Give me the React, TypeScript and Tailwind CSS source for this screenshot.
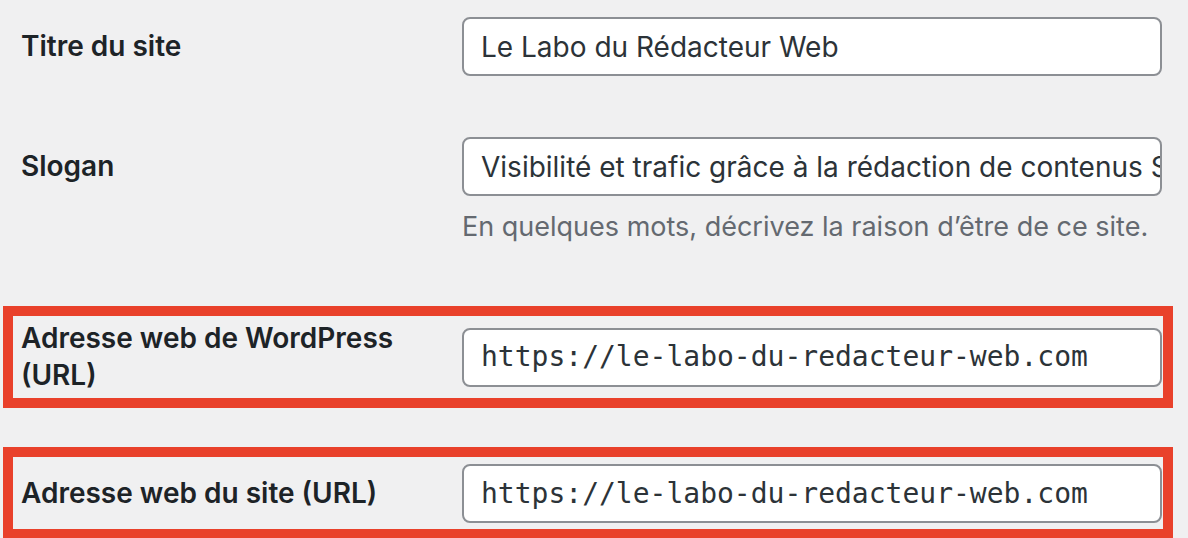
const sans = "font-['Inter','Noto_Sans',sans-serif]";

function Field({ value, mono = false }: { value: string; mono?: boolean }) {
  return (
    <div className="flex h-[59px] w-[700px] items-center overflow-hidden whitespace-nowrap rounded-[8px] border-2 border-[#8c8f94] bg-white pl-[17px] pr-[3px]">
      <span
        className={
          mono
            ? "font-['DejaVu_Sans_Mono','Liberation_Mono',monospace] text-[28px] text-[#2c3338]"
            : `${sans} text-[28px] text-[#2c3338]`
        }
      >
        {value}
      </span>
    </div>
  );
}

function Row({ label, children }: { label: React.ReactNode; children: React.ReactNode }) {
  return (
    <div className="flex items-center">
      <div className={`${sans} w-[462px] shrink-0 pl-[21px] pr-[40px] text-[28px] font-semibold leading-[37px] text-[#1d2327]`}>
        {label}
      </div>
      {children}
    </div>
  );
}

export default function App() {
  return (
    <div className="h-[538px] w-[1188px] overflow-hidden bg-[#f0f0f1] pt-[17px]">
      <Row label="Titre du site">
        <Field value="Le Labo du Rédacteur Web" />
      </Row>

      <div className="mt-[61px]">
        <Row label="Slogan">
          <Field value="Visibilité et trafic grâce à la rédaction de contenus SEO" />
        </Row>
        <p className={`${sans} ml-[462px] mt-[14px] text-[27px] leading-[34px] text-[#646970]`}>
          En quelques mots, décrivez la raison d’être de ce site.
        </p>
      </div>

      <div className="ml-[3px] mt-[62px] w-[1170px] border-[10px] border-[#e9412b]">
        <div className="-ml-[13px] py-[4px]">
          <Row label={<>Adresse web de WordPress<br />(URL)</>}>
            <Field value="https://le-labo-du-redacteur-web.com" mono />
          </Row>
        </div>
      </div>

      <div className="ml-[3px] mt-[39px] w-[1170px] border-[10px] border-[#e9412b]">
        <div className="-ml-[13px] pt-[7px] pb-[6px]">
          <Row label="Adresse web du site (URL)">
            <Field value="https://le-labo-du-redacteur-web.com" mono />
          </Row>
        </div>
      </div>
    </div>
  );
}
